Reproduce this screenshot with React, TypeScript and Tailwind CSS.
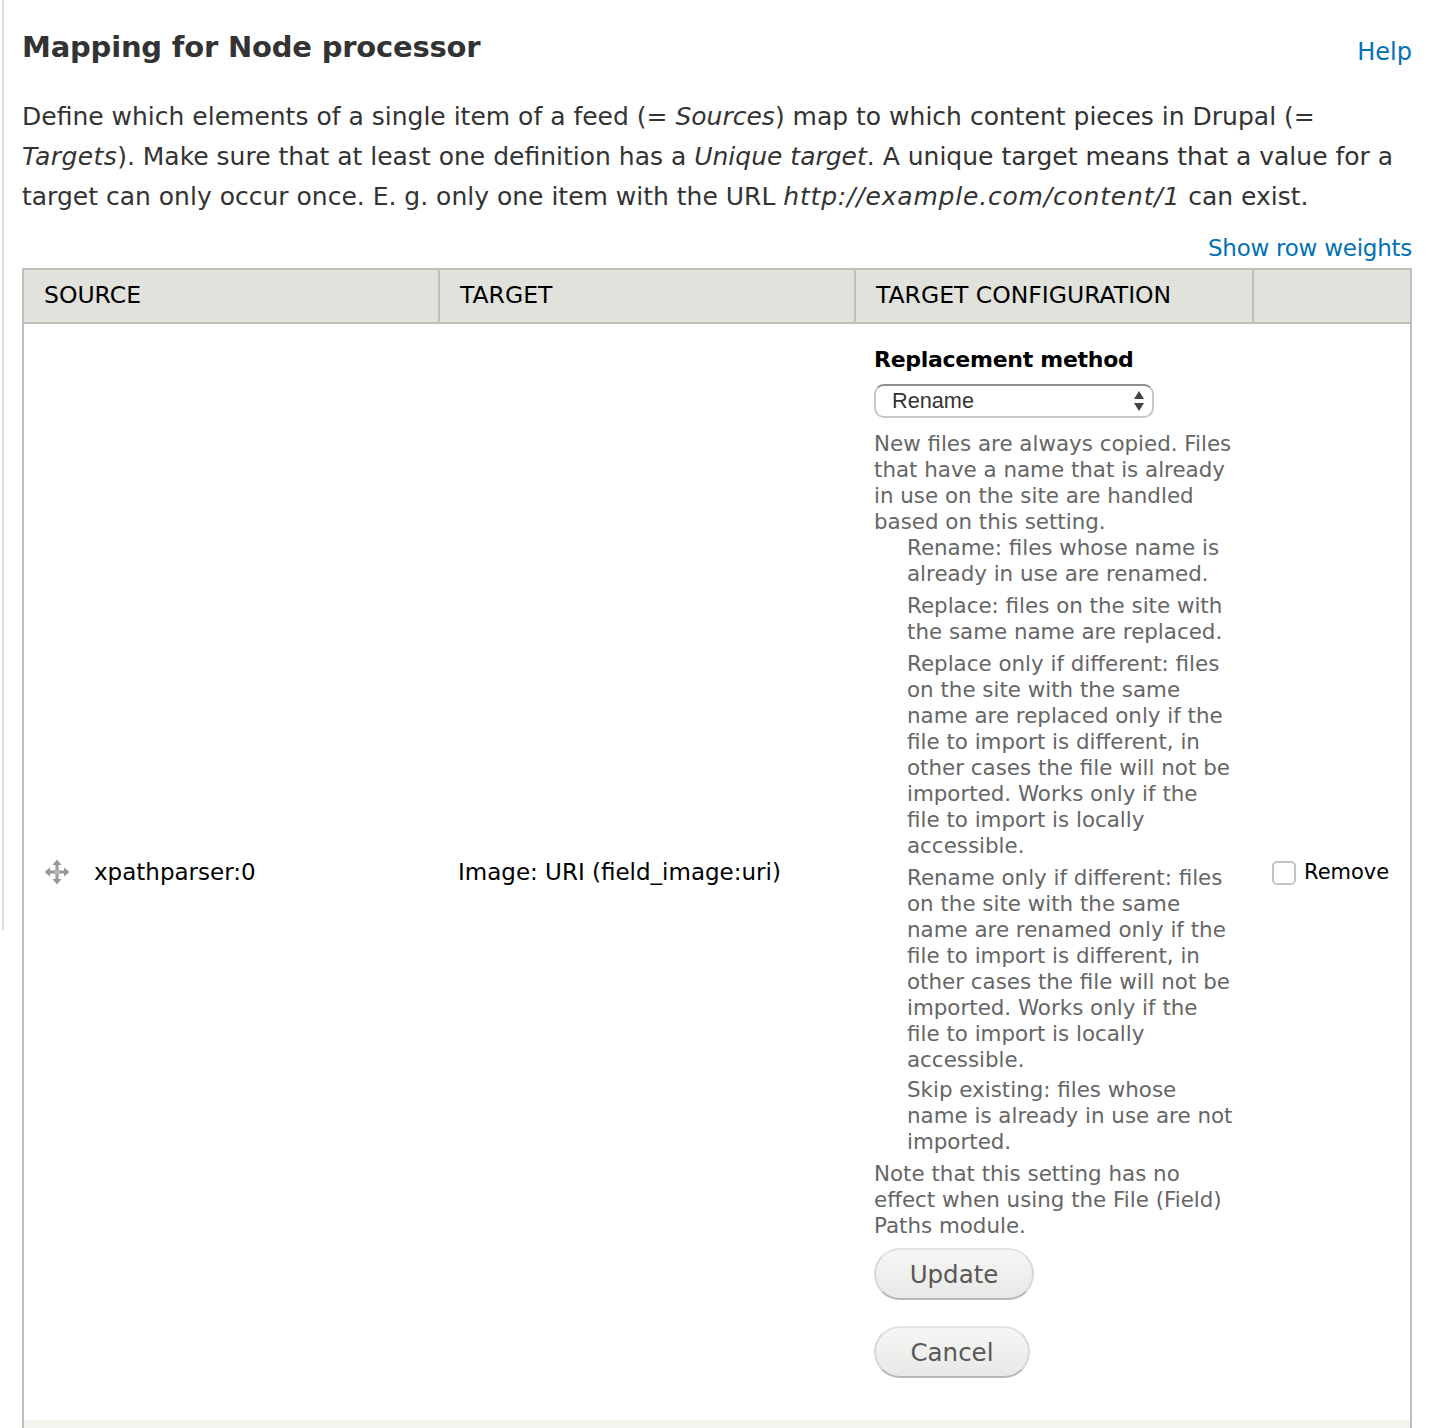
const font = "font-['DejaVu_Sans',sans-serif]";

function Lines({ lines }: { lines: string[] }) {
  return (
    <>
      {lines.map((l) => (
        <div key={l} className="whitespace-nowrap">{l}</div>
      ))}
    </>
  );
}

function DragHandle() {
  return (
    <svg width="26" height="26" viewBox="0 0 26 26" className="shrink-0">
      <g fill="#989898">
        <rect x="11.5" y="4" width="3" height="18" />
        <rect x="4" y="11.5" width="18" height="3" />
        <path d="M13 0.5l4.5 5.5h-9zM13 25.5l-4.5-5.5h9zM0.5 13l5.5-4.5v9zM25.5 13l-5.5 4.5v-9z" />
      </g>
      <rect x="10.5" y="10.5" width="5" height="5" fill="#b4b4b4" />
    </svg>
  );
}

function Btn({ label, w }: { label: string; w: string }) {
  return (
    <button className={`${w} block h-[52px] rounded-[26px] border-2 border-[#d8d8d4] border-t-[#dfe3e8] border-b-[#b8b8b4] bg-gradient-to-b from-[#f6f6f4] to-[#e8e8e6] pt-[3px] text-[24.5px] text-[#5a5756] text-center`}>
      {label}
    </button>
  );
}

export default function App() {
  return (
    <div className={`${font} relative h-[1428px] overflow-hidden bg-white text-[#333]`}>
      <div className="absolute left-[2px] top-0 h-[930px] w-[2px] bg-[#dcdcdc]" />
      <div className="pl-[22px] pr-[30px]">
        <div className="flex items-start justify-between pt-[24px]">
          <h2 className="text-[29px] leading-[46px] font-bold tracking-[-0.2px] text-[#333]">Mapping for Node processor</h2>
          <a className="mt-[10px] text-[24px] leading-[36px] text-[#0071b3]">Help</a>
        </div>
        <div className="mt-[27px] text-[25px] leading-[40px] text-[#333]">
          <div className="whitespace-nowrap">Define which elements of a single item of a feed (= <em>Sources</em>) map to which content pieces in Drupal (=</div>
          <div className="whitespace-nowrap"><em className="tracking-[0.4px]">Targets</em>). Make sure that at least one definition has a <em>Unique target</em>. A unique target means that a value for a</div>
          <div className="whitespace-nowrap">target can only occur once. E. g. only one item with the URL <em className="tracking-[0.8px]">http://example.com/content/1</em> can exist.</div>
        </div>
        <div className="mt-[13px] h-[38px] text-right text-[23px] leading-[36px] tracking-[-0.25px] text-[#0071b3]">Show row weights</div>
        <table className="w-[1390px] table-fixed border-collapse border-2 border-[#bebfb9] text-black">
          <thead>
            <tr className="h-[54px] border-b-2 border-[#bebfb9] bg-[#e1e2dc] text-left text-[23.5px] font-normal">
              <th className="w-[416px] border-r-2 border-[#bebfb9] pl-[20px] font-normal">SOURCE</th>
              <th className="w-[416px] border-r-2 border-[#bebfb9] pl-[20px] font-normal">TARGET</th>
              <th className="w-[398px] border-r-2 border-[#bebfb9] pl-[20px] font-normal">TARGET CONFIGURATION</th>
              <th className="font-normal" />
            </tr>
          </thead>
          <tbody>
            <tr className="align-middle text-[23px]">
              <td className="pl-[20px]">
                <div className="flex items-center gap-[24px]">
                  <DragHandle />
                  <span>xpathparser:0</span>
                </div>
              </td>
              <td className="pl-[19px]">Image: URI (field_image:uri)</td>
              <td className="pl-[19px] pt-[20px] pb-[42px]">
                <div className="text-[22px] leading-[32px] font-bold tracking-[-0.28px] text-black">Replacement method</div>
                <div className="relative mt-[8px] h-[34px] w-[280px] rounded-[10px] border-2 border-[#c8c8c8] border-t-[#8f8f8f] pl-[16px] font-['Liberation_Sans',sans-serif] text-[21.7px] leading-[30px] text-[#333]">
                  Rename
                  <svg width="12" height="22" viewBox="0 0 12 22" className="absolute right-[7px] top-[4px]">
                    <path d="M6 1l5 8H1zM6 21l-5-8h10z" fill="#444" />
                  </svg>
                </div>
                <div className="mt-[13px] text-[21.4px] leading-[26px] text-[#666]">
                  <Lines lines={["New files are always copied. Files", "that have a name that is already", "in use on the site are handled", "based on this setting."]} />
                  <ul className="pl-[33px]">
                    <li><Lines lines={["Rename: files whose name is", "already in use are renamed."]} /></li>
                    <li className="mt-[6px]"><Lines lines={["Replace: files on the site with", "the same name are replaced."]} /></li>
                    <li className="mt-[6px]"><Lines lines={["Replace only if different: files", "on the site with the same", "name are replaced only if the", "file to import is different, in", "other cases the file will not be", "imported. Works only if the", "file to import is locally", "accessible."]} /></li>
                    <li className="mt-[6px]"><Lines lines={["Rename only if different: files", "on the site with the same", "name are renamed only if the", "file to import is different, in", "other cases the file will not be", "imported. Works only if the", "file to import is locally", "accessible."]} /></li>
                    <li className="mt-[4px]"><Lines lines={["Skip existing: files whose", "name is already in use are not", "imported."]} /></li>
                  </ul>
                  <div className="mt-[6px]"><Lines lines={["Note that this setting has no", "effect when using the File (Field)", "Paths module."]} /></div>
                </div>
                <div className="mt-[9px] flex flex-col gap-[26px]">
                  <Btn label="Update" w="w-[160px]" />
                  <Btn label="Cancel" w="w-[156px]" />
                </div>
              </td>
              <td className="pl-[19px]">
                <div className="flex items-center gap-[8px] pt-[1px] text-[21px]">
                  <span className="h-[24px] w-[24px] rounded-[5px] border-2 border-[#c4c4c4] bg-white" />
                  <span>Remove</span>
                </div>
              </td>
            </tr>
            <tr className="h-[30px] bg-[#f3f4ee]"><td colSpan={4} /></tr>
          </tbody>
        </table>
      </div>
    </div>
  );
}
